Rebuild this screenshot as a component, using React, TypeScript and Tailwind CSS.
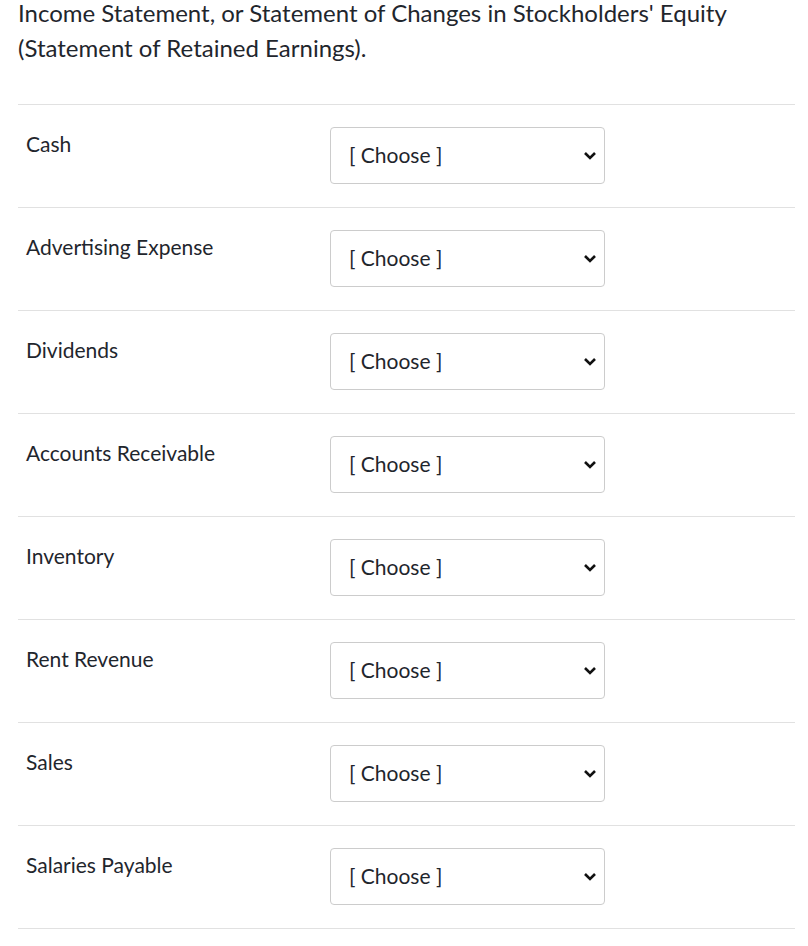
const ITEMS = [
  'Cash',
  'Advertising Expense',
  'Dividends',
  'Accounts Receivable',
  'Inventory',
  'Rent Revenue',
  'Sales',
  'Salaries Payable',
];

export default function App() {
  return (
    <div className="min-h-screen bg-white text-[#1f262d]" style={{ fontFamily: 'Lato, "Noto Sans", sans-serif' }}>
      <p className="pl-[18px] pr-2 text-[24px] leading-[35px] -mt-[5px]">
        Income Statement, or Statement of Changes in Stockholders' Equity
        <br />
        (Statement of Retained Earnings).
      </p>

      <div className="ml-[18px] mr-[13px] mt-[39px] border-t border-[#e1e1e1]">
        {ITEMS.map(item => (
          <div key={item} className="flex border-b border-[#e1e1e1] pt-[22px] pb-[23px]">
            <div className="w-[312px] pl-2 pt-[5px] text-[21px] leading-6">{item}</div>
            <div className="flex h-[57px] w-[275px] items-center justify-between rounded border border-[#cccccc] bg-white pb-[2px] pl-[18px] pr-[7px]">
              <span className="text-[21px]">[ Choose ]</span>
              <svg width="14" height="9" viewBox="0 0 14 9" fill="none" className="mt-[2px]">
                <polyline points="2,2 7,7 12,2" stroke="#111" strokeWidth="2.6" />
              </svg>
            </div>
          </div>
        ))}
      </div>
    </div>
  );
}
